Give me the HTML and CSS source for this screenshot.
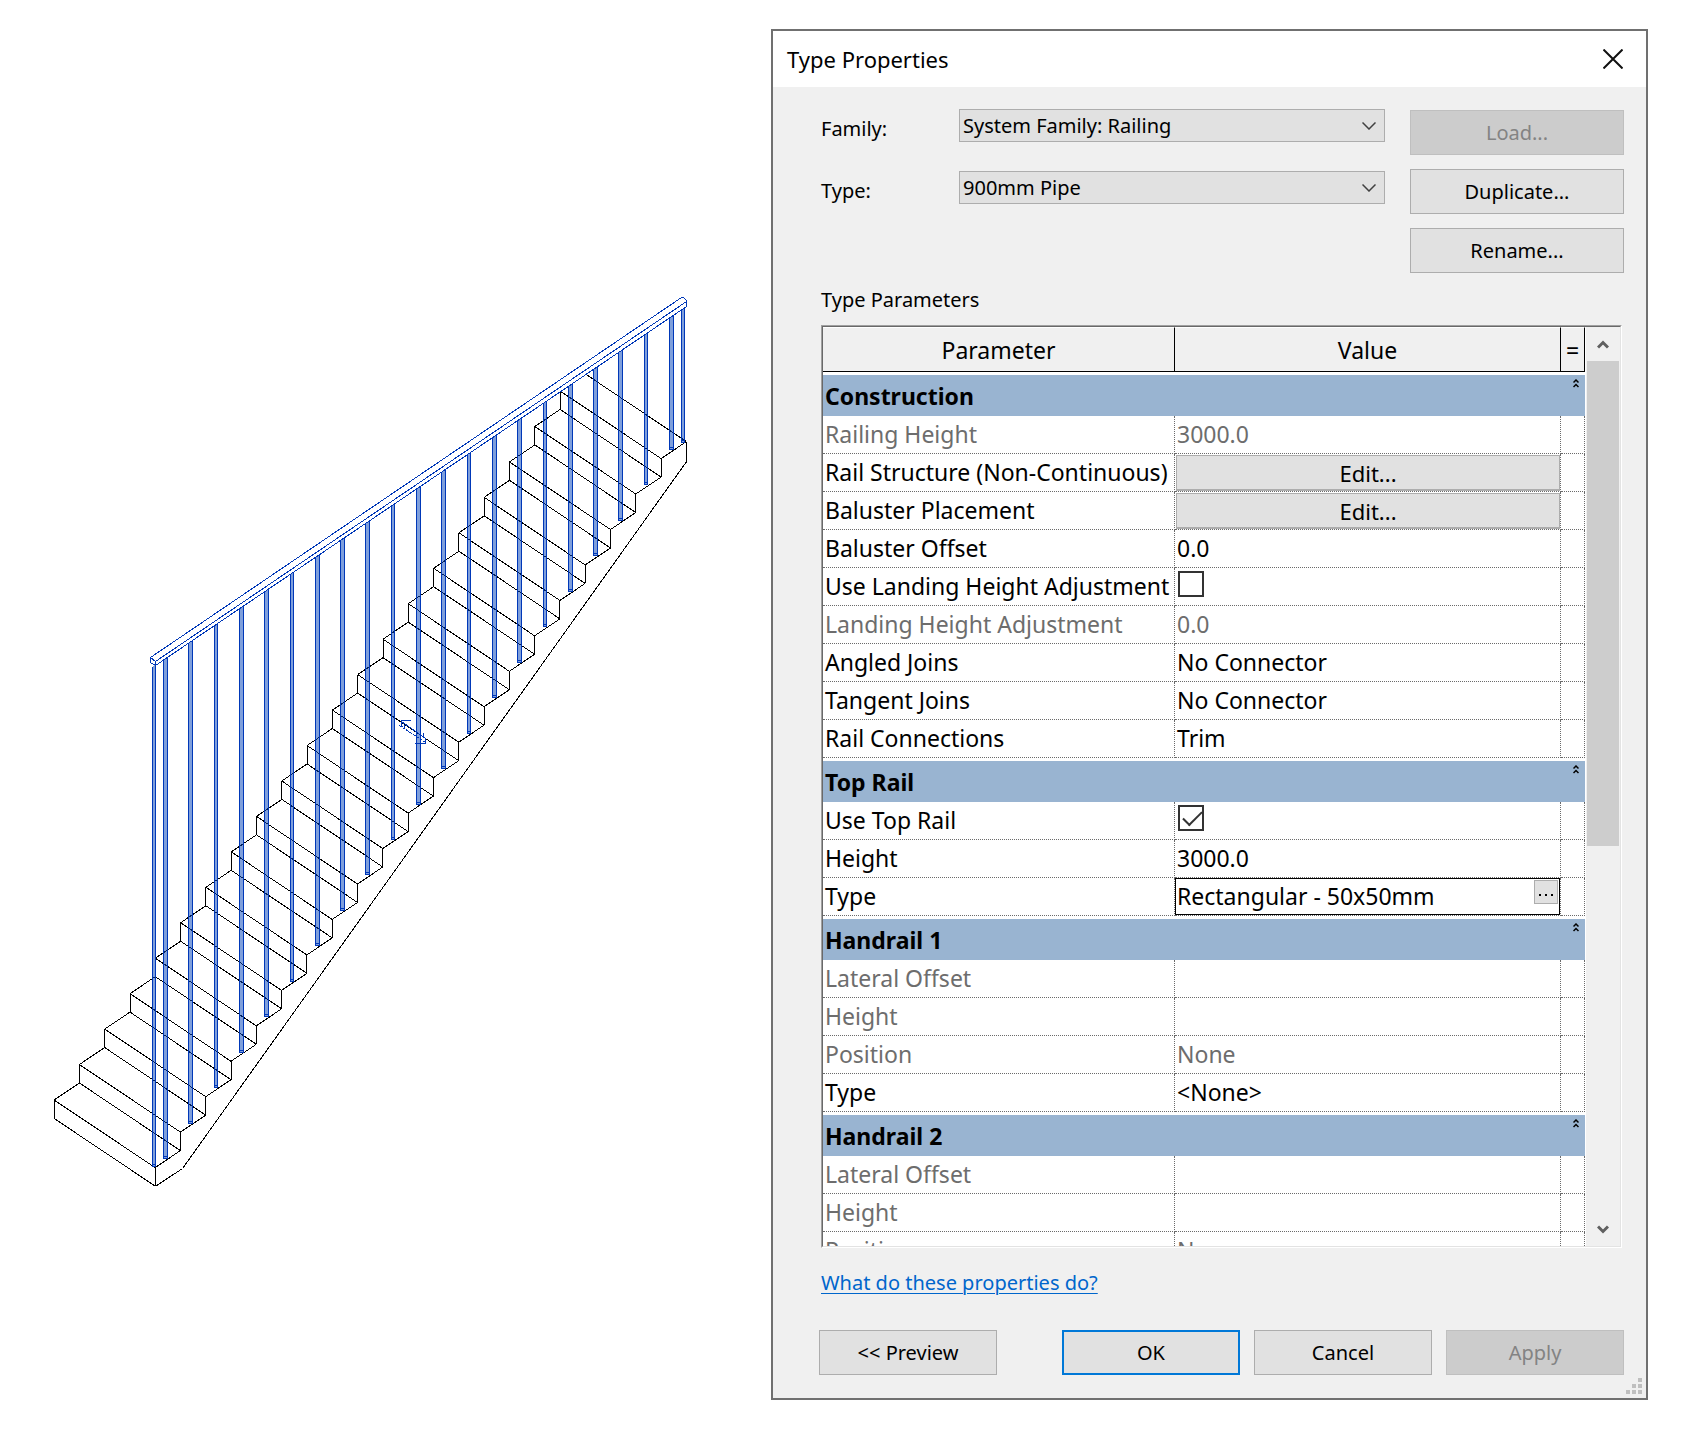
FILE: index.html
```html
<!DOCTYPE html>
<html lang="en">
<head>
    <meta charset="UTF-8">
    <meta name="viewport" content="width=device-width, initial-scale=1.0">
    <title>Type Properties</title>
    <link rel="stylesheet" href="styles.css">
</head>
<body>
    <main class="drawing">
        <svg id="stair" viewBox="0 0 771 1434" role="img" aria-label="Stair with railing">
            <path id="steps" class="stair-line" />
            <g id="balusters"></g>
            <path class="rail" d="M150.5 657.5 L681.5 297.5 L683.5 297.5 L686.5 300.5 L686.5 306.5 L155.5 665.5 L150.5 662.5 Z" />
            <path class="rail-line" d="M150.5 657.5 L155.5 661.5 L155.5 665.5 M155.5 661.5 L686.5 301.5" />
            <path class="rail-line" d="M411 720.5 H401.5 V726 M401.5 721.5 L425.5 738.5 M423.5 733 V738 M415 743.5 H425.5 V738" />
            <path class="rail-line dashed" d="M399.5 725.5 L425.5 742.5 M400 727 L404 726 L404 730" />
        </svg>
    </main>

    <section class="dialog">
        <header class="title-bar">
            <h1>Type Properties</h1>
            <button class="close-button" aria-label="Close">
                <svg width="20" height="20" viewBox="0 0 20 20"><path d="M0.5 0.5 L19.5 19.5 M19.5 0.5 L0.5 19.5" /></svg>
            </button>
        </header>

        <div class="type-form">
            <div class="fields">
                <div class="field">
                    <label for="family">Family:</label>
                    <div class="combo">
                        <select id="family"><option>System Family: Railing</option></select>
                        <svg width="14" height="8" viewBox="0 0 14 8"><path d="M0.5 0.5 L7 7 L13.5 0.5" /></svg>
                    </div>
                </div>
                <div class="field">
                    <label for="type">Type:</label>
                    <div class="combo">
                        <select id="type"><option>900mm Pipe</option></select>
                        <svg width="14" height="8" viewBox="0 0 14 8"><path d="M0.5 0.5 L7 7 L13.5 0.5" /></svg>
                    </div>
                </div>
            </div>
            <div class="type-buttons">
                <button class="btn" disabled>Load...</button>
                <button class="btn">Duplicate...</button>
                <button class="btn">Rename...</button>
            </div>
        </div>

        <h2 class="list-title">Type Parameters</h2>
        <div class="list">
            <div class="list-inner">
                <div class="list-view">
                    <table class="params">
                        <colgroup><col class="col-name"><col><col class="col-eq"></colgroup>
                        <thead>
                            <tr><th>Parameter</th><th>Value</th><th>=</th></tr>
                        </thead>
                        <tbody>
                            <tr class="group"><th colspan="3"><div>Construction <button class="collapse" aria-label="Collapse"><svg width="6" height="9" viewBox="0 0 6 9"><path d="M0.5 3.5 L3 1 L5.5 3.5 M0.5 8 L3 5.5 L5.5 8" /></svg></button></div></th></tr>
                            <tr class="off"><td>Railing Height</td><td>3000.0</td><td></td></tr>
                            <tr><td>Rail Structure (Non-Continuous)</td><td class="fill"><button class="edit">Edit...</button></td><td></td></tr>
                            <tr><td>Baluster Placement</td><td class="fill"><button class="edit">Edit...</button></td><td></td></tr>
                            <tr><td>Baluster Offset</td><td>0.0</td><td></td></tr>
                            <tr><td><label for="use-landing">Use Landing Height Adjustment</label></td><td class="check"><input type="checkbox" id="use-landing"></td><td></td></tr>
                            <tr class="off"><td>Landing Height Adjustment</td><td>0.0</td><td></td></tr>
                            <tr><td>Angled Joins</td><td>No Connector</td><td></td></tr>
                            <tr><td>Tangent Joins</td><td>No Connector</td><td></td></tr>
                            <tr><td>Rail Connections</td><td>Trim</td><td></td></tr>
                        </tbody>
                        <tbody>
                            <tr class="group"><th colspan="3"><div>Top Rail <button class="collapse" aria-label="Collapse"><svg width="6" height="9" viewBox="0 0 6 9"><path d="M0.5 3.5 L3 1 L5.5 3.5 M0.5 8 L3 5.5 L5.5 8" /></svg></button></div></th></tr>
                            <tr><td><label for="use-top">Use Top Rail</label></td><td class="check"><input type="checkbox" id="use-top" checked></td><td></td></tr>
                            <tr><td>Height</td><td>3000.0</td><td></td></tr>
                            <tr><td><label for="rail-type">Type</label></td><td class="fill"><div class="active-cell"><input type="text" id="rail-type" value="Rectangular - 50x50mm"><button class="more" aria-label="Browse"><svg width="14" height="2" viewBox="0 0 14 2"><path d="M0 0h2v2h-2z M6 0h2v2h-2z M12 0h2v2h-2z" /></svg></button></div></td><td></td></tr>
                        </tbody>
                        <tbody>
                            <tr class="group"><th colspan="3"><div>Handrail 1 <button class="collapse" aria-label="Collapse"><svg width="6" height="9" viewBox="0 0 6 9"><path d="M0.5 3.5 L3 1 L5.5 3.5 M0.5 8 L3 5.5 L5.5 8" /></svg></button></div></th></tr>
                            <tr class="off"><td>Lateral Offset</td><td></td><td></td></tr>
                            <tr class="off"><td>Height</td><td></td><td></td></tr>
                            <tr class="off"><td>Position</td><td>None</td><td></td></tr>
                            <tr><td>Type</td><td>&lt;None&gt;</td><td></td></tr>
                        </tbody>
                        <tbody>
                            <tr class="group"><th colspan="3"><div>Handrail 2 <button class="collapse" aria-label="Collapse"><svg width="6" height="9" viewBox="0 0 6 9"><path d="M0.5 3.5 L3 1 L5.5 3.5 M0.5 8 L3 5.5 L5.5 8" /></svg></button></div></th></tr>
                            <tr class="off"><td>Lateral Offset</td><td></td><td></td></tr>
                            <tr class="off"><td>Height</td><td></td><td></td></tr>
                            <tr class="off"><td>Position</td><td>None</td><td></td></tr>
                        </tbody>
                    </table>
                </div>
                <div class="scrollbar">
                    <button aria-label="Scroll up"><svg width="12" height="9" viewBox="0 0 12 9"><path d="M1 7.5 L6 2.5 L11 7.5" /></svg></button>
                    <div class="track"><div class="thumb"></div></div>
                    <button aria-label="Scroll down"><svg width="12" height="9" viewBox="0 0 12 9"><path d="M1 1.5 L6 6.5 L11 1.5" /></svg></button>
                </div>
            </div>
        </div>

        <p class="help"><a href="#">What do these properties do?</a></p>

        <footer class="actions">
            <button class="btn preview">&lt;&lt; Preview</button>
            <button class="btn default">OK</button>
            <button class="btn">Cancel</button>
            <button class="btn" disabled>Apply</button>
        </footer>
        <svg class="grip" width="16" height="16" viewBox="0 0 16 16"><path d="M12 0h4v4h-4z M6 6h4v4h-4z M12 6h4v4h-4z M0 12h4v4h-4z M6 12h4v4h-4z M12 12h4v4h-4z" /></svg>
    </section>

    <script>
        var run = 25.3;
        var rise = 35.45;
        var tread = 17;
        var steps = 21;
        var d = '';

        function line(x1, y1, x2, y2) {
            d += 'M' + x1 + ' ' + y1 + ' L' + x2 + ' ' + y2 + ' ';
        }

        // each step: nosing, riser on both sides, tread edges, foot of the next riser
        for (var i = 0; i < steps; i++) {
            var x = 54.1 + run * i;
            var y = 1100 - rise * i;
            line(x, y, x, y + 18.7);
            line(x, y, x + run, y - tread);
            line(x, y, x + 101, y + 67.6);
            line(x + 101, y + 67.6, x + 101, y + 86.1);
            line(x + 101, y + 67.6, x + 101 + run, y + 67.6 - tread);
            line(x + run, y - tread, x + run + 101, y - tread + 67.6);
        }
        line(54.5, 1118.7, 155.5, 1186.3);
        line(155.5, 1186.3, 182.5, 1168.5);
        line(182.5, 1168.5, 686.5, 461.7);
        line(686.5, 442, 686.5, 461.7);
        document.getElementById('steps').setAttribute('d', d);

        var group = document.getElementById('balusters');

        function baluster(left, right, bottom) {
            var top = Math.round(664 - (left - 156) * 0.677);
            var foot = Math.round(bottom);
            var p = document.createElementNS('http://www.w3.org/2000/svg', 'path');
            p.setAttribute('class', 'baluster');
            p.setAttribute('d', 'M' + (left + 0.5) + ' ' + top + ' V' + (foot - 0.5) + ' H' + (right - 0.5) + ' V' + (top - 3) + ' M' + left + ' ' + (foot - 2.5) + ' H' + right);
            group.appendChild(p);
        }

        baluster(152, 156, 1167);
        for (var k = 0; k <= 20; k++) {
            baluster(Math.round(163 + run * k), Math.round(167.7 + run * k), 1159 - rise * k);
        }
        baluster(681, 685, 443);
    </script>
</body>
</html>
```
FILE: styles.css
```css
* {
    box-sizing: border-box;
}
body {
    margin: 0;
    padding: 29px 36px 34px 0;
    display: flex;
    align-items: flex-start;
    background-color: #fff;
    color: #000;
    font-family: "Noto Sans", "Open Sans", sans-serif;
    font-size: 20px;
}
button, select, input {
    font: inherit;
    color: inherit;
    margin: 0;
    padding: 0;
    border-radius: 0;
}

/* stair drawing */
.drawing {
    flex: 1 1 771px;
    min-width: 0;
    margin: -29px 0 -34px;
}
.drawing svg {
    display: block;
    width: 100%;
    shape-rendering: crispEdges;
}
.stair-line {
    fill: none;
    stroke: #000;
}
.baluster {
    fill: rgba(0, 64, 184, 0.5);
    stroke: #0038b8;
}
.rail {
    fill: #fff;
    stroke: #0038b8;
}
.rail-line {
    fill: none;
    stroke: #0038b8;
}
.dashed {
    stroke-dasharray: 3 1;
}

/* dialog */
.dialog {
    position: relative;
    flex: 1 1 877px;
    min-width: 0;
    border: 2px solid #707070;
    background-color: #f0f0f0;
}
.title-bar {
    display: flex;
    justify-content: space-between;
    align-items: center;
    height: 56px;
    padding: 0 23px 0 14px;
    background-color: #fff;
}
.title-bar h1 {
    margin: 0;
    font-size: 22px;
    font-weight: normal;
}
.close-button {
    display: flex;
    border: none;
    background: none;
}
.close-button path {
    stroke: #111;
    stroke-width: 2;
}
.type-form {
    display: flex;
    gap: 25px;
    padding: 22px 22px 0 48px;
}
.fields {
    flex: 1;
    display: flex;
    flex-direction: column;
    gap: 29px;
}
.field {
    display: flex;
}
.field label {
    width: 138px;
    padding-top: 3px;
    line-height: 33px;
    height: 33px;
}
.combo {
    position: relative;
    flex: 1;
}
.combo select {
    display: block;
    width: 100%;
    height: 33px;
    padding: 0 0 0 3px;
    border: 1px solid #adadad;
    background-color: #e1e1e1;
    appearance: none;
}
.combo svg {
    position: absolute;
    right: 9px;
    top: 13px;
    pointer-events: none;
}
.combo path {
    fill: none;
    stroke: #404040;
    stroke-width: 1.5;
}
.type-buttons {
    display: flex;
    flex-direction: column;
    gap: 14px;
    width: 214px;
    padding-top: 1px;
}
.btn {
    height: 45px;
    border: 1px solid #adadad;
    background-color: #e1e1e1;
}
.btn:disabled {
    border-color: #bfbfbf;
    background-color: #ccc;
    color: #838383;
}
.btn.default {
    border: 2px solid #0078d7;
}
.list-title {
    margin: 12px 0 10px 48px;
    font-size: 20px;
    font-weight: normal;
    line-height: 30px;
}

/* parameter list */
.list {
    margin: 0 24px 0 48px;
    border: 1px solid;
    border-color: #a0a0a0 #fff #fff #a0a0a0;
}
.list-inner {
    display: flex;
    height: 921px;
    border: 1px solid;
    border-color: #696969 #e3e3e3 #e3e3e3 #696969;
    background-color: #fff;
}
.list-view {
    flex: 1;
    overflow: hidden;
}
.params {
    width: 100%;
    table-layout: fixed;
    border-collapse: separate;
    border-spacing: 0;
    font-size: 23px;
}
.col-name {
    width: 352px;
}
.col-eq {
    width: 24px;
}
.params thead th {
    height: 45px;
    padding: 0;
    border-top: 1px solid #fff;
    border-right: 1px solid #000;
    border-bottom: 1px solid #000;
    background-color: #f0f0f0;
    font-weight: normal;
}
.params td {
    height: 38px;
    padding: 0 0 1px 2px;
    border-right: 1px dotted #6b6b6b;
    border-bottom: 1px dotted #6b6b6b;
    line-height: 36px;
    white-space: nowrap;
}
.params .off {
    color: #6d6d6d;
}
.group th {
    padding: 0;
    border-top: 3px solid #fff;
    background-color: #99b4d1;
    text-align: left;
}
.group div {
    display: flex;
    justify-content: space-between;
    align-items: flex-start;
    height: 41px;
    padding: 0 6px 0 2px;
    line-height: 42px;
}
.collapse {
    display: flex;
    padding-top: 4px;
    border: none;
    background: none;
}
.collapse path {
    fill: none;
    stroke: #000;
    stroke-width: 1.5;
}
.params .fill {
    padding: 0;
}
.edit {
    display: block;
    width: calc(100% - 1px);
    height: 36px;
    margin: 1px 0 0 1px;
    border: 1px solid #adadad;
    border-bottom-width: 2px;
    background-color: #e1e1e1;
    font-size: 22px;
    line-height: 32px;
}
.params .check {
    padding: 3px 0 0 3px;
    line-height: 0;
    vertical-align: top;
}
.check input {
    width: 26px;
    height: 26px;
    border: 2px solid #333;
    background-color: #fff;
    appearance: none;
}
.check input:checked::before {
    content: "";
    display: block;
    width: 17px;
    height: 8px;
    margin: 4px 0 0 3px;
    border-left: 2px solid #333;
    border-bottom: 2px solid #333;
    transform: rotate(-45deg);
}
.active-cell {
    display: flex;
    align-items: flex-start;
    height: 37px;
    padding: 1px 1px 0 0;
    border: 1px solid #000;
}
.active-cell input {
    flex: 1;
    min-width: 0;
    height: 32px;
    padding-left: 1px;
    border: none;
    outline: none;
    background: none;
}
.more {
    display: flex;
    justify-content: center;
    align-items: center;
    width: 24px;
    height: 24px;
    padding-top: 6px;
    border: 1px solid #adadad;
    background-color: #e1e1e1;
}

/* scrollbar */
.scrollbar {
    display: flex;
    flex-direction: column;
    width: 35px;
    padding: 0 1px 0 1px;
    border-left: 1px solid #fff;
    background-color: #f0f0f0;
}
.scrollbar button {
    display: flex;
    justify-content: center;
    align-items: center;
    height: 34px;
    border: none;
    background: none;
}
.scrollbar path {
    fill: none;
    stroke: #606060;
    stroke-width: 3;
}
.track {
    flex: 1;
}
.thumb {
    height: 57%;
    background-color: #cdcdcd;
}
.help {
    margin: 20px 0 0 48px;
    line-height: 30px;
}
.help a {
    color: #0066cc;
    text-decoration-thickness: 1px;
    text-underline-offset: 3px;
}
.actions {
    display: flex;
    justify-content: flex-end;
    gap: 14px;
    padding: 32px 22px 23px 46px;
}
.actions .btn {
    width: 178px;
}
.actions .preview {
    margin-right: auto;
}
.grip {
    position: absolute;
    right: 4px;
    bottom: 4px;
    fill: #bfbfbf;
}
```
